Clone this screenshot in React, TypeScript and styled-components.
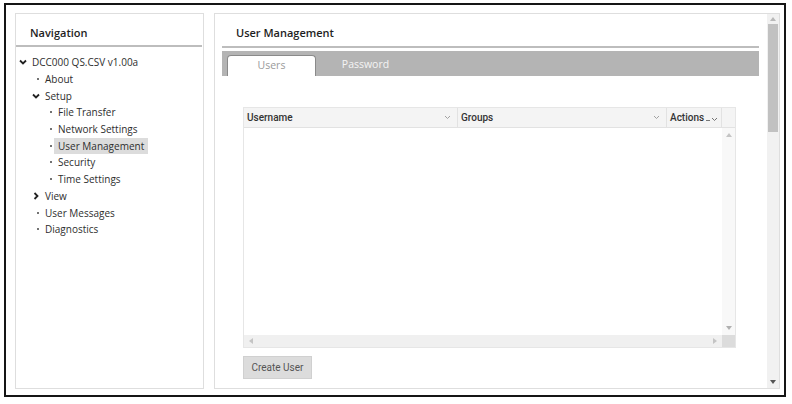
import React from 'react';
import styled, { createGlobalStyle } from 'styled-components';

const GlobalStyle = createGlobalStyle`
  html, body {
    margin: 0;
    padding: 0;
    background: #fff;
  }
  * {
    box-sizing: border-box;
  }
`;

const Frame = styled.div`
  margin: 3px 0 0 4px;
  width: 782px;
  height: 394px;
  border: 2px solid #151515;
  display: flex;
  gap: 10px;
  padding: 8px 4px 6px 9px;
  font-family: 'Open Sans', 'Liberation Sans', sans-serif;
  color: #333;
`;

const NavPanel = styled.div`
  width: 189px;
  border: 1px solid #dedede;
  display: flex;
  flex-direction: column;
`;

const PanelTitle = styled.div`
  font-size: 11px;
  font-weight: 600;
  line-height: 18px;
  color: #1e1e1e;
  padding: 10px 0 4px 14px;
  border-bottom: 2px solid #bdbdbd;
`;

const NavTitle = styled(PanelTitle)`
  margin-right: 1px;
  padding-bottom: 3px;
`;

const Tree = styled.ul`
  list-style: none;
  margin: 7px 0 0;
  padding: 0;
`;

const TreeRow = styled.li<{ $level: number }>`
  display: flex;
  align-items: center;
  height: 16.7px;
  padding-left: ${p => 3 + p.$level * 13}px;
  font-size: 10px;
  color: #2e2e2e;
  white-space: nowrap;
`;

const Marker = styled.span`
  width: 13px;
  flex: none;
  display: flex;
  align-items: center;
`;

const Bullet = styled.span`
  width: 2px;
  height: 2px;
  border-radius: 1px;
  background: #444;
  margin-left: 5px;
`;

const Label = styled.span<{ $active?: boolean }>`
  line-height: 16px;
  padding: 0 4px;
  margin-left: -4px;
  background: ${p => (p.$active ? '#dcdcdc' : 'transparent')};
`;

const MainPanel = styled.div`
  flex: 1;
  border: 1px solid #dedede;
  display: flex;
`;

const Content = styled.div`
  flex: 1;
  padding: 0 8px 0 7px;
  display: flex;
  flex-direction: column;
`;

const TabBar = styled.div`
  margin-top: 3px;
  height: 25px;
  background: #b4b4b4;
  display: flex;
  align-items: flex-end;
  padding-left: 5px;
`;

const Tab = styled.div<{ $active?: boolean }>`
  width: 89px;
  height: 21px;
  display: flex;
  align-items: center;
  justify-content: center;
  font-size: 10.5px;
  padding-bottom: 3px;
  color: ${p => (p.$active ? '#9a9a9a' : '#f4f4f4')};
  background: ${p => (p.$active ? '#fff' : 'transparent')};
  border: ${p => (p.$active ? '1px solid #8a8a8a' : 'none')};
  border-bottom: none;
  border-radius: 4px 4px 0 0;
  & + & {
    margin-left: 5px;
  }
`;

const Table = styled.div`
  margin: 31px 0 0 21px;
  width: 493px;
  border: 1px solid #e6e6e6;
  font-family: Roboto, 'Liberation Sans', sans-serif;
`;

const HeaderRow = styled.div`
  display: grid;
  grid-template-columns: 214px 209px 55px 13px;
  height: 20px;
  background: #f4f4f4;
  border-bottom: 1px solid #e2e2e2;
`;

const HeaderCell = styled.div`
  display: flex;
  align-items: center;
  justify-content: space-between;
  padding: 0 6px 0 3px;
  font-size: 10px;
  font-weight: 500;
  color: #333;
  border-right: 1px solid #e2e2e2;
  white-space: nowrap;
  &:last-child {
    border-right: none;
  }
`;

const SortMark = styled.span`
  display: flex;
  align-items: flex-end;
  gap: 1px;
  padding-top: 3px;
  margin-left: 2px;
`;

const Dash = styled.span`
  width: 4px;
  height: 1px;
  background: #777;
  margin-bottom: 1px;
`;

const Body = styled.div`
  display: grid;
  grid-template-columns: 1fr 13px;
  grid-template-rows: 207px 12px;
`;

const VScroll = styled.div`
  background: #f8f8f8;
  display: flex;
  flex-direction: column;
  justify-content: space-between;
  align-items: center;
  padding: 5px 0 5px;
`;

const HScroll = styled.div`
  background: #f0f0f0;
  display: flex;
  justify-content: space-between;
  align-items: center;
  padding: 0 5px 0 5px;
`;

const Corner = styled.div`
  background: #dcdcdc;
`;

const Button = styled.button`
  margin: 8px 0 0 21px;
  width: 69px;
  height: 23px;
  background: #dcdcdc;
  border: 1px solid #d0d0d0;
  font-family: Roboto, 'Liberation Sans', sans-serif;
  font-size: 10px;
  color: #555;
  padding: 0;
`;

const PageScroll = styled.div`
  width: 12px;
  background: #f1f1f1;
  display: flex;
  flex-direction: column;
  align-items: center;
  padding: 3px 0 4px;
`;

const Thumb = styled.div`
  margin-top: 3px;
  width: 10px;
  height: 108px;
  background: #c1c1c1;
`;

const Spacer = styled.div`
  flex: 1;
`;

const Chevron = ({ open }: { open: boolean }) => (
  <svg width="8" height="8" viewBox="0 0 8 8">
    <polyline
      points={open ? '1,2.5 4,5.5 7,2.5' : '2.5,1 5.5,4 2.5,7'}
      fill="none"
      stroke="#222"
      strokeWidth="1.8"
    />
  </svg>
);

const SmallCaret = ({ color = '#999' }: { color?: string }) => (
  <svg width="7" height="5" viewBox="0 0 7 5">
    <polyline points="1,1 3.5,3.5 6,1" fill="none" stroke={color} strokeWidth="0.9" />
  </svg>
);

const Arrow = ({ dir, color = '#bbb' }: { dir: 'up' | 'down' | 'left' | 'right'; color?: string }) => {
  const pts = {
    up: '0,4 3,0 6,4',
    down: '0,0 3,4 6,0',
    left: '4,0 0,3 4,6',
    right: '0,0 4,3 0,6',
  }[dir];
  const vertical = dir === 'up' || dir === 'down';
  return (
    <svg width={vertical ? 6 : 4} height={vertical ? 4 : 6} viewBox={vertical ? '0 0 6 4' : '0 0 4 6'}>
      <polygon points={pts} fill={color} />
    </svg>
  );
};

type Node = { label: string; level: number; kind: 'open' | 'closed' | 'leaf'; active?: boolean };

const nodes: Node[] = [
  { label: 'DCC000 QS.CSV v1.00a', level: 0, kind: 'open' },
  { label: 'About', level: 1, kind: 'leaf' },
  { label: 'Setup', level: 1, kind: 'open' },
  { label: 'File Transfer', level: 2, kind: 'leaf' },
  { label: 'Network Settings', level: 2, kind: 'leaf' },
  { label: 'User Management', level: 2, kind: 'leaf', active: true },
  { label: 'Security', level: 2, kind: 'leaf' },
  { label: 'Time Settings', level: 2, kind: 'leaf' },
  { label: 'View', level: 1, kind: 'closed' },
  { label: 'User Messages', level: 1, kind: 'leaf' },
  { label: 'Diagnostics', level: 1, kind: 'leaf' },
];

const App: React.FC = () => (
  <>
    <GlobalStyle />
    <Frame>
      <NavPanel>
        <NavTitle>Navigation</NavTitle>
        <Tree>
          {nodes.map(n => (
            <TreeRow key={n.label} $level={n.level}>
              <Marker>
                {n.kind === 'leaf' ? <Bullet /> : <Chevron open={n.kind === 'open'} />}
              </Marker>
              <Label $active={n.active}>{n.label}</Label>
            </TreeRow>
          ))}
        </Tree>
      </NavPanel>
      <MainPanel>
        <Content>
          <PanelTitle>User Management</PanelTitle>
          <TabBar>
            <Tab $active>Users</Tab>
            <Tab>Password</Tab>
          </TabBar>
          <Table>
            <HeaderRow>
              <HeaderCell>
                Username <SmallCaret />
              </HeaderCell>
              <HeaderCell>
                Groups <SmallCaret />
              </HeaderCell>
              <HeaderCell>
                Actions
                <SortMark>
                  <Dash />
                  <SmallCaret color="#666" />
                </SortMark>
              </HeaderCell>
              <HeaderCell />
            </HeaderRow>
            <Body>
              <div />
              <VScroll>
                <Arrow dir="up" color="#c4c4c4" />
                <Arrow dir="down" color="#b0b0b0" />
              </VScroll>
              <HScroll>
                <Arrow dir="left" color="#c4c4c4" />
                <Arrow dir="right" color="#c4c4c4" />
              </HScroll>
              <Corner />
            </Body>
          </Table>
          <Button>Create User</Button>
        </Content>
        <PageScroll>
          <Arrow dir="up" color="#b8b8b8" />
          <Thumb />
          <Spacer />
          <Arrow dir="down" color="#555" />
        </PageScroll>
      </MainPanel>
    </Frame>
  </>
);

export default App;
